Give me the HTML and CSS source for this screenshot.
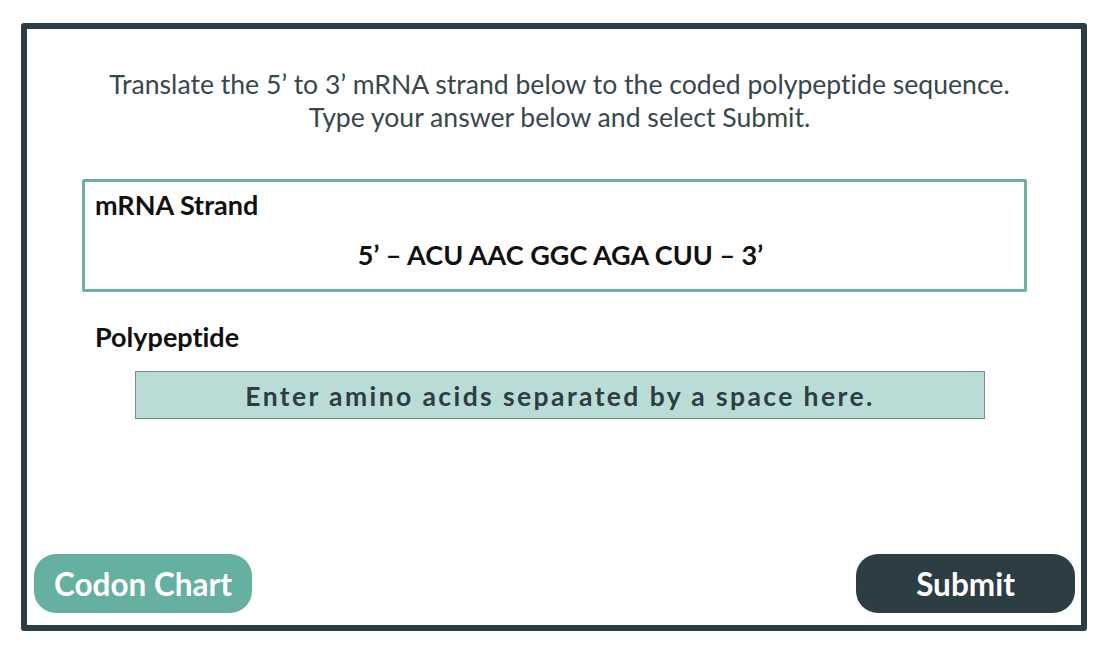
FILE: index.html
```html
<!DOCTYPE html>
<html>
<head>
<meta charset="utf-8">
<link rel="stylesheet" href="styles.css">
</head>
<body>
<div class="frame">
  <div class="prompt">
    <p>Translate the 5’ to 3’ mRNA strand below to the coded polypeptide sequence.</p>
    <p>Type your answer below and select Submit.</p>
  </div>
  <div class="strand-box">
    <div class="label">mRNA Strand</div>
    <div class="sequence">5’ – ACU AAC GGC AGA CUU – 3’</div>
  </div>
  <div class="label poly-label">Polypeptide</div>
  <div class="answer">Enter amino acids separated by a space here.</div>
  <div class="actions">
    <button class="btn btn-chart">Codon Chart</button>
    <button class="btn btn-submit">Submit</button>
  </div>
</div>
</body>
</html>
```
FILE: styles.css
```css
html, body {
  margin: 0;
  padding: 0;
  background: #ffffff;
}
body {
  font-family: Lato, "Open Sans", sans-serif;
  font-variant-ligatures: none;
  width: 1110px;
  height: 666px;
  overflow: hidden;
}
.frame {
  box-sizing: border-box;
  margin: 23px 0 0 21px;
  width: 1066px;
  height: 608px;
  border: 6px solid #2c3d43;
  border-radius: 3px;
  display: flex;
  flex-direction: column;
  padding: 39px 6px 12px 6px;
}
.prompt {
  text-align: center;
  color: #37474c;
  font-size: 26.6px;
  line-height: 33px;
  padding-left: 11px;
}
.prompt p {
  margin: 0;
}
.strand-box {
  margin: 45px 48px 0 49px;
  height: 113px;
  box-sizing: border-box;
  border: 3px solid #6db0a3;
  border-radius: 2px;
  padding: 7px 10px 0 10px;
}
.label {
  font-weight: 700;
  font-size: 27px;
  line-height: 32px;
  color: #111;
}
.sequence {
  font-weight: 700;
  font-size: 27px;
  line-height: 32px;
  color: #111;
  text-align: center;
  margin-top: 18px;
  padding-left: 12px;
}
.poly-label {
  margin: 29px 0 0 62px;
}
.answer {
  margin: 18px 0 0 102px;
  width: 850px;
  height: 48px;
  box-sizing: border-box;
  background: #badcd7;
  border: 1px solid #7d8a8a;
  color: #2c3d43;
  font-weight: 700;
  font-size: 26.5px;
  line-height: 48px;
  letter-spacing: 2.4px;
  text-align: center;
}
.actions {
  margin-top: auto;
  display: flex;
  justify-content: space-between;
}
.btn {
  border: none;
  height: 59px;
  border-radius: 22px;
  font-family: Lato, "Open Sans", sans-serif;
  font-weight: 700;
  font-size: 31.5px;
  color: #ffffff;
  padding: 0;
  cursor: pointer;
}
.btn-chart {
  width: 218px;
  background: #66b0a1;
  margin-left: 1px;
}
.btn-submit {
  width: 219px;
  background: #2c3d43;
}
```
